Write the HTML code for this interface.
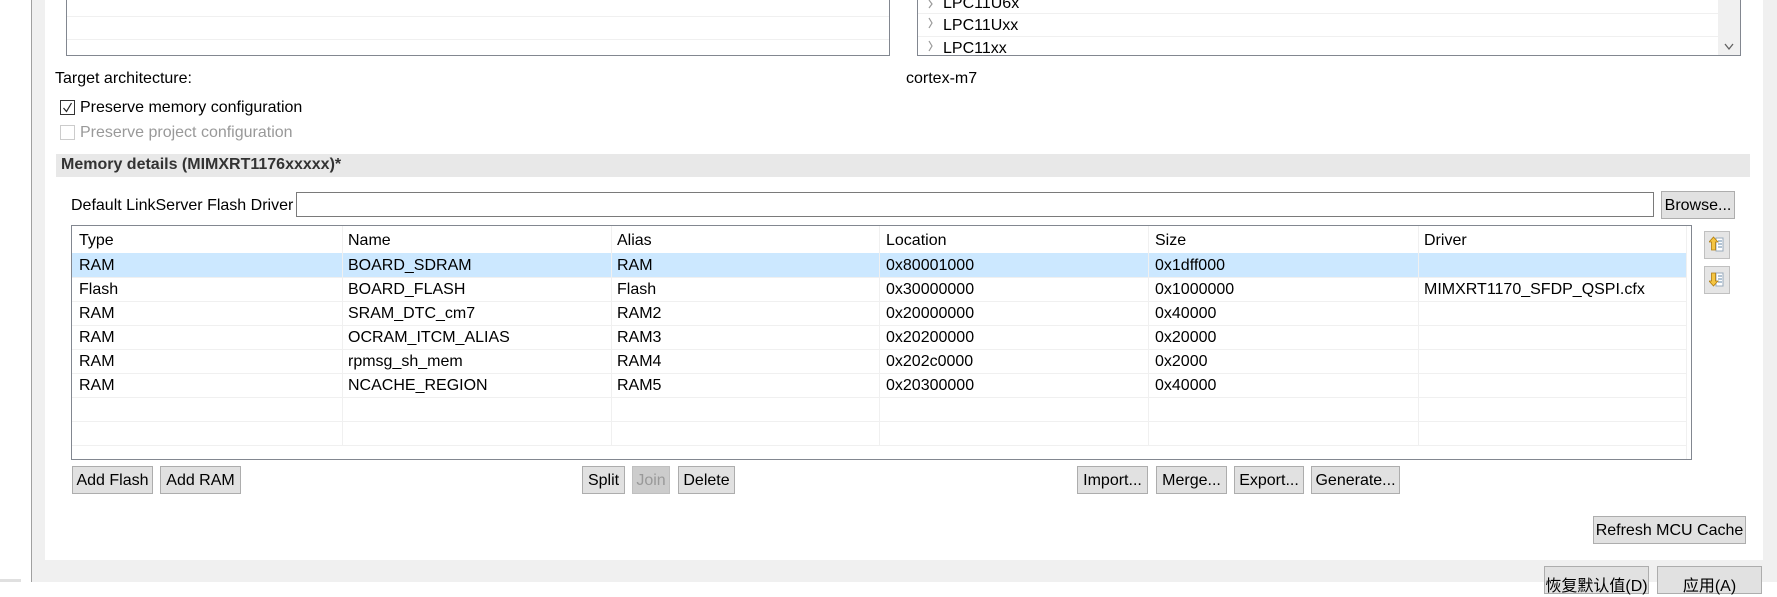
<!DOCTYPE html>
<html><head><meta charset="utf-8"><style>
*{margin:0;padding:0;box-sizing:border-box}
body{width:1777px;height:582px;overflow:hidden;background:#fff;font-family:"Liberation Sans","Noto Sans CJK SC",sans-serif;font-size:16px;color:#000;position:relative}
.a{position:absolute}
.t{position:absolute;white-space:nowrap;line-height:20px}
.btn{position:absolute;background:#e1e1e1;border:1px solid #adadad;text-align:center;line-height:27px;white-space:nowrap}
.hl{position:absolute;height:1px;background:#f0f0f0}
.vl{position:absolute;width:1px;background:#f0f0f0}
</style></head><body>
<div class="a" style="left:31px;top:0;width:1px;height:582px;background:#a0a0a0"></div>
<div class="a" style="left:32px;top:0;width:1745px;height:582px;background:#f0f0f0"></div>
<div class="a" style="left:0;top:579px;width:21px;height:3px;background:#e0e0e0"></div>
<div class="a" style="left:45px;top:0;width:1718px;height:560px;background:#fff"></div>

<div class="a" style="left:66px;top:-2px;width:824px;height:58px;border:1px solid #828790;border-top:none"></div>
<div class="hl" style="left:67px;top:16px;width:822px"></div>
<div class="hl" style="left:67px;top:39px;width:822px"></div>

<div class="a" style="left:917px;top:-2px;width:824px;height:58px;border:1px solid #828790;border-top:none"></div>
<div class="a" style="left:1718px;top:0;width:22px;height:55px;background:#f0f0f0"></div>
<svg class="a" style="left:1723px;top:42px" width="12" height="10"><path d="M2 2 L6 7 L10 2" fill="none" stroke="#606060" stroke-width="1.3"/></svg>
<div class="hl" style="left:918px;top:13px;width:800px"></div>
<div class="hl" style="left:918px;top:36px;width:800px"></div>
<svg class="a" style="left:926px;top:-2px" width="10" height="60"><path d="M3 2 L6 6 L3 10 M3 20 L6 25 L3 30 M3 43 L6 48 L3 53" fill="none" stroke="#999" stroke-width="1.2"/></svg>
<div class="t" style="left:943px;top:-6px">LPC11U6x</div>
<div class="t" style="left:943px;top:16px">LPC11Uxx</div>
<div class="t" style="left:943px;top:39px">LPC11xx</div>

<div class="t" style="left:55px;top:69px">Target architecture:</div>
<div class="t" style="left:906px;top:69px">cortex-m7</div>

<div class="a" style="left:60px;top:100px;width:15px;height:15px;border:1px solid #333"></div>
<svg class="a" style="left:62px;top:102px" width="11" height="11"><path d="M1.5 6 L4.5 9.5 L9.5 1" fill="none" stroke="#222" stroke-width="1.2"/></svg>
<div class="t" style="left:80px;top:98px">Preserve memory configuration</div>
<div class="a" style="left:60px;top:125px;width:15px;height:15px;border:1px solid #ccc"></div>
<div class="t" style="left:80px;top:123px;color:#999">Preserve project configuration</div>

<div class="a" style="left:56px;top:154px;width:1694px;height:23px;background:#e8e8e8"></div>
<div class="t" style="left:61px;top:155px;font-weight:bold;color:#333">Memory details (MIMXRT1176xxxxx)*</div>

<div class="t" style="left:71px;top:196px">Default LinkServer Flash Driver</div>
<div class="a" style="left:296px;top:192px;width:1358px;height:25px;border:1px solid #7a7a7a"></div>
<div class="btn" style="left:1661px;top:191px;width:74px;height:28px">Browse...</div>

<div class="a" style="left:71px;top:225px;width:1621px;height:235px;border:1px solid #828790"></div>
<div class="a" style="left:72px;top:253px;width:1614px;height:24px;background:#cce8ff"></div>
<div class="vl" style="left:342px;top:226px;height:219px"></div>
<div class="vl" style="left:611px;top:226px;height:219px"></div>
<div class="vl" style="left:879px;top:226px;height:219px"></div>
<div class="vl" style="left:1148px;top:226px;height:219px"></div>
<div class="vl" style="left:1418px;top:226px;height:219px"></div>
<div class="vl" style="left:1686px;top:226px;height:233px"></div>
<div class="hl" style="left:72px;top:277px;width:1614px"></div>
<div class="hl" style="left:72px;top:301px;width:1614px"></div>
<div class="hl" style="left:72px;top:325px;width:1614px"></div>
<div class="hl" style="left:72px;top:349px;width:1614px"></div>
<div class="hl" style="left:72px;top:373px;width:1614px"></div>
<div class="hl" style="left:72px;top:397px;width:1614px"></div>
<div class="hl" style="left:72px;top:421px;width:1614px"></div>
<div class="hl" style="left:72px;top:445px;width:1614px"></div>

<div class="t" style="left:79px;top:231px">Type</div><div class="t" style="left:348px;top:231px">Name</div><div class="t" style="left:617px;top:231px">Alias</div><div class="t" style="left:886px;top:231px">Location</div><div class="t" style="left:1155px;top:231px">Size</div><div class="t" style="left:1424px;top:231px">Driver</div>

<div class="t" style="left:79px;top:256px">RAM</div><div class="t" style="left:348px;top:256px">BOARD_SDRAM</div><div class="t" style="left:617px;top:256px">RAM</div><div class="t" style="left:886px;top:256px">0x80001000</div><div class="t" style="left:1155px;top:256px">0x1dff000</div>
<div class="t" style="left:79px;top:280px">Flash</div><div class="t" style="left:348px;top:280px">BOARD_FLASH</div><div class="t" style="left:617px;top:280px">Flash</div><div class="t" style="left:886px;top:280px">0x30000000</div><div class="t" style="left:1155px;top:280px">0x1000000</div><div class="t" style="left:1424px;top:280px">MIMXRT1170_SFDP_QSPI.cfx</div>
<div class="t" style="left:79px;top:304px">RAM</div><div class="t" style="left:348px;top:304px">SRAM_DTC_cm7</div><div class="t" style="left:617px;top:304px">RAM2</div><div class="t" style="left:886px;top:304px">0x20000000</div><div class="t" style="left:1155px;top:304px">0x40000</div>
<div class="t" style="left:79px;top:328px">RAM</div><div class="t" style="left:348px;top:328px">OCRAM_ITCM_ALIAS</div><div class="t" style="left:617px;top:328px">RAM3</div><div class="t" style="left:886px;top:328px">0x20200000</div><div class="t" style="left:1155px;top:328px">0x20000</div>
<div class="t" style="left:79px;top:352px">RAM</div><div class="t" style="left:348px;top:352px">rpmsg_sh_mem</div><div class="t" style="left:617px;top:352px">RAM4</div><div class="t" style="left:886px;top:352px">0x202c0000</div><div class="t" style="left:1155px;top:352px">0x2000</div>
<div class="t" style="left:79px;top:376px">RAM</div><div class="t" style="left:348px;top:376px">NCACHE_REGION</div><div class="t" style="left:617px;top:376px">RAM5</div><div class="t" style="left:886px;top:376px">0x20300000</div><div class="t" style="left:1155px;top:376px">0x40000</div>

<div class="btn" style="left:1704px;top:231px;width:26px;height:28px;background:#e5e5e5;border-color:#c0c0c0"></div>
<svg class="a" style="left:1709px;top:236px" width="16" height="18"><rect x="7" y="2" width="7" height="13" fill="#fff" stroke="#9ab"/><path d="M9 5h4M9 8h4M9 11h4" stroke="#68a"/><path d="M4.5 1 L9 6 H6.5 V14 H2.5 V6 H0 Z" fill="#f5c542" stroke="#b07c10" stroke-width="0.8"/></svg>
<div class="btn" style="left:1704px;top:266px;width:26px;height:28px;background:#e5e5e5;border-color:#c0c0c0"></div>
<svg class="a" style="left:1709px;top:271px" width="16" height="18"><rect x="7" y="2" width="7" height="13" fill="#fff" stroke="#9ab"/><path d="M9 5h4M9 8h4M9 11h4" stroke="#68a"/><path d="M4.5 15 L9 10 H6.5 V2 H2.5 V10 H0 Z" fill="#f5c542" stroke="#b07c10" stroke-width="0.8"/></svg>

<div class="btn" style="left:72px;top:466px;width:81px;height:28px">Add Flash</div>
<div class="btn" style="left:160px;top:466px;width:81px;height:28px">Add RAM</div>
<div class="btn" style="left:582px;top:466px;width:43px;height:28px">Split</div>
<div class="btn" style="left:632px;top:466px;width:38px;height:28px;background:#ccc;border-color:#bfbfbf;color:#999">Join</div>
<div class="btn" style="left:678px;top:466px;width:57px;height:28px">Delete</div>
<div class="btn" style="left:1077px;top:466px;width:71px;height:28px">Import...</div>
<div class="btn" style="left:1156px;top:466px;width:71px;height:28px">Merge...</div>
<div class="btn" style="left:1234px;top:466px;width:70px;height:28px">Export...</div>
<div class="btn" style="left:1311px;top:466px;width:89px;height:28px">Generate...</div>
<div class="btn" style="left:1593px;top:516px;width:153px;height:28px">Refresh MCU Cache</div>

<div class="btn" style="left:1544px;top:566px;width:105px;height:28px;line-height:20px;padding-top:10px">恢复默认值(D)</div>
<div class="btn" style="left:1657px;top:566px;width:105px;height:28px;line-height:20px;padding-top:10px">应用(A)</div>
</body></html>
